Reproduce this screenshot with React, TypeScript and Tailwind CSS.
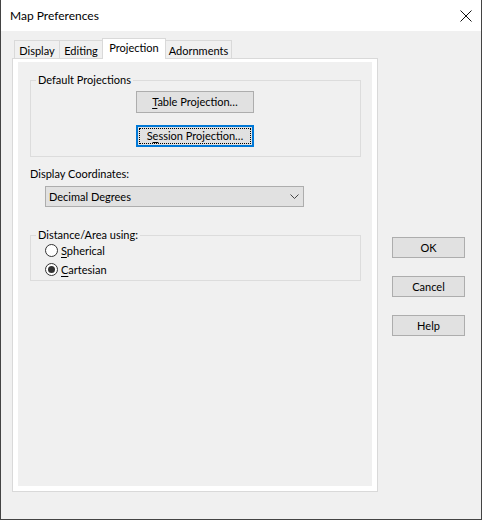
import React from "react";

const FONT = "font-['Lato','Liberation_Sans',sans-serif]";

function Tab({ label, active, className }: { label: string; active?: boolean; className: string }) {
  if (active) {
    return (
      <div
        className={`relative z-10 -ml-px -mb-px h-[21px] flex items-start justify-center pt-[2px] bg-white border border-b-0 border-[#d9d9d9] text-[11px] leading-[14px] ${className}`}
      >
        {label}
      </div>
    );
  }
  return (
    <div
      className={`h-[18px] flex items-start justify-center pt-[3px] bg-[#f0f0f0] border border-b-0 border-[#d9d9d9] text-[11px] leading-[14px] ${className}`}
    >
      {label}
    </div>
  );
}

function PushButton({
  children,
  focused,
  className = "",
}: {
  children: React.ReactNode;
  focused?: boolean;
  className?: string;
}) {
  if (focused) {
    return (
      <div className={`border-2 border-[#0078d7] bg-[#e1e1e1] p-px flex ${className}`}>
        <div className="flex-1 border border-dotted border-black flex items-center justify-center text-[11px] leading-[14px]">
          {children}
        </div>
      </div>
    );
  }
  return (
    <div
      className={`border border-[#adadad] bg-[#e1e1e1] flex items-center justify-center text-[11px] leading-[14px] ${className}`}
    >
      {children}
    </div>
  );
}

function Radio({ checked, children }: { checked?: boolean; children: React.ReactNode }) {
  return (
    <div className="h-[19px] flex items-center gap-[3px] pl-[9px]">
      <div className="w-[13px] h-[13px] rounded-full border border-[#333333] bg-white flex items-center justify-center">
        {checked && <div className="w-[7px] h-[7px] rounded-full bg-[#333333]" />}
      </div>
      <span className="text-[11px] leading-[14px]">{children}</span>
    </div>
  );
}

export default function App() {
  return (
    <div
      className={`w-[482px] h-[520px] flex flex-col bg-[#f0f0f0] border-x border-b border-[#434343] text-black ${FONT}`}
    >
      {/* title bar */}
      <div className="h-[31px] shrink-0 bg-white flex items-center justify-between pl-[9px] pr-[9px]">
        <span className="text-[12px] leading-[16px]">Map Preferences</span>
        <svg width="12" height="12" viewBox="0 0 12 12" className="mt-[1px]">
          <path d="M0.5 0.5 L11.5 11.5 M11.5 0.5 L0.5 11.5" stroke="#111" strokeWidth="1" fill="none" />
        </svg>
      </div>

      <div className="flex-1 flex">
        {/* property sheet */}
        <div className="pl-[11px] pt-[7px] flex flex-col">
          <div className="h-[20px] flex items-end pl-[2px]">
            <Tab label="Display" className="w-[46px]" />
            <Tab label="Editing" className="-ml-px w-[44px]" />
            <Tab label="Projection" active className="w-[64px]" />
            <Tab label="Adornments" className="-ml-px w-[67px]" />
          </div>
          <div className="w-[366px] h-[434px] border border-[#d9d9d9] bg-white pt-[3px] px-[5px] pb-[5px] flex">
            <div className="flex-1 bg-[#f0f0f0] pl-[12px] pr-[11px] pt-[11px] flex flex-col text-[11px]">
              <fieldset className="border border-[#dcdcdc] pl-[5px] pb-[9px]">
                <legend className="px-[2px] leading-[14px]">Default Projections</legend>
                <PushButton className="mt-[4px] ml-[100px] w-[118px] h-[22px]">
                  <span>
                    <span className="underline underline-offset-2">T</span>able Projection…
                  </span>
                </PushButton>
                <PushButton focused className="mt-[12px] ml-[100px] w-[118px] h-[22px]">
                  <span>
                    S<span className="underline underline-offset-2">e</span>ssion Projection…
                  </span>
                </PushButton>
              </fieldset>

              <div className="mt-[9px] leading-[16px]">Display Coordinates:</div>
              <div className="mt-[4px] ml-[15px] w-[259px] h-[21px] border border-[#adadad] bg-[#e1e1e1] flex items-center justify-between pl-[3px] pr-[4px]">
                <span className="leading-[14px]">Decimal Degrees</span>
                <svg width="9" height="5" viewBox="0 0 9 5">
                  <path d="M0.5 0.5 L4.5 4.5 L8.5 0.5" stroke="#444" strokeWidth="1" fill="none" />
                </svg>
              </div>

              <fieldset className="mt-[21px] border border-[#dcdcdc] pl-[5px] pb-[1px]">
                <legend className="px-[2px] leading-[14px]">Distance/Area using:</legend>
                <div className="-mt-px">
                  <Radio>
                    <span className="underline underline-offset-2">S</span>pherical
                  </Radio>
                  <Radio checked>
                    <span className="underline underline-offset-2">C</span>artesian
                  </Radio>
                </div>
              </fieldset>
            </div>
          </div>
        </div>

        {/* dialog buttons */}
        <div className="ml-[14px] pt-[206px] flex flex-col gap-[18px]">
          <PushButton className="w-[73px] h-[21px]">OK</PushButton>
          <PushButton className="w-[73px] h-[21px]">Cancel</PushButton>
          <PushButton className="w-[73px] h-[21px]">Help</PushButton>
        </div>
      </div>
    </div>
  );
}
